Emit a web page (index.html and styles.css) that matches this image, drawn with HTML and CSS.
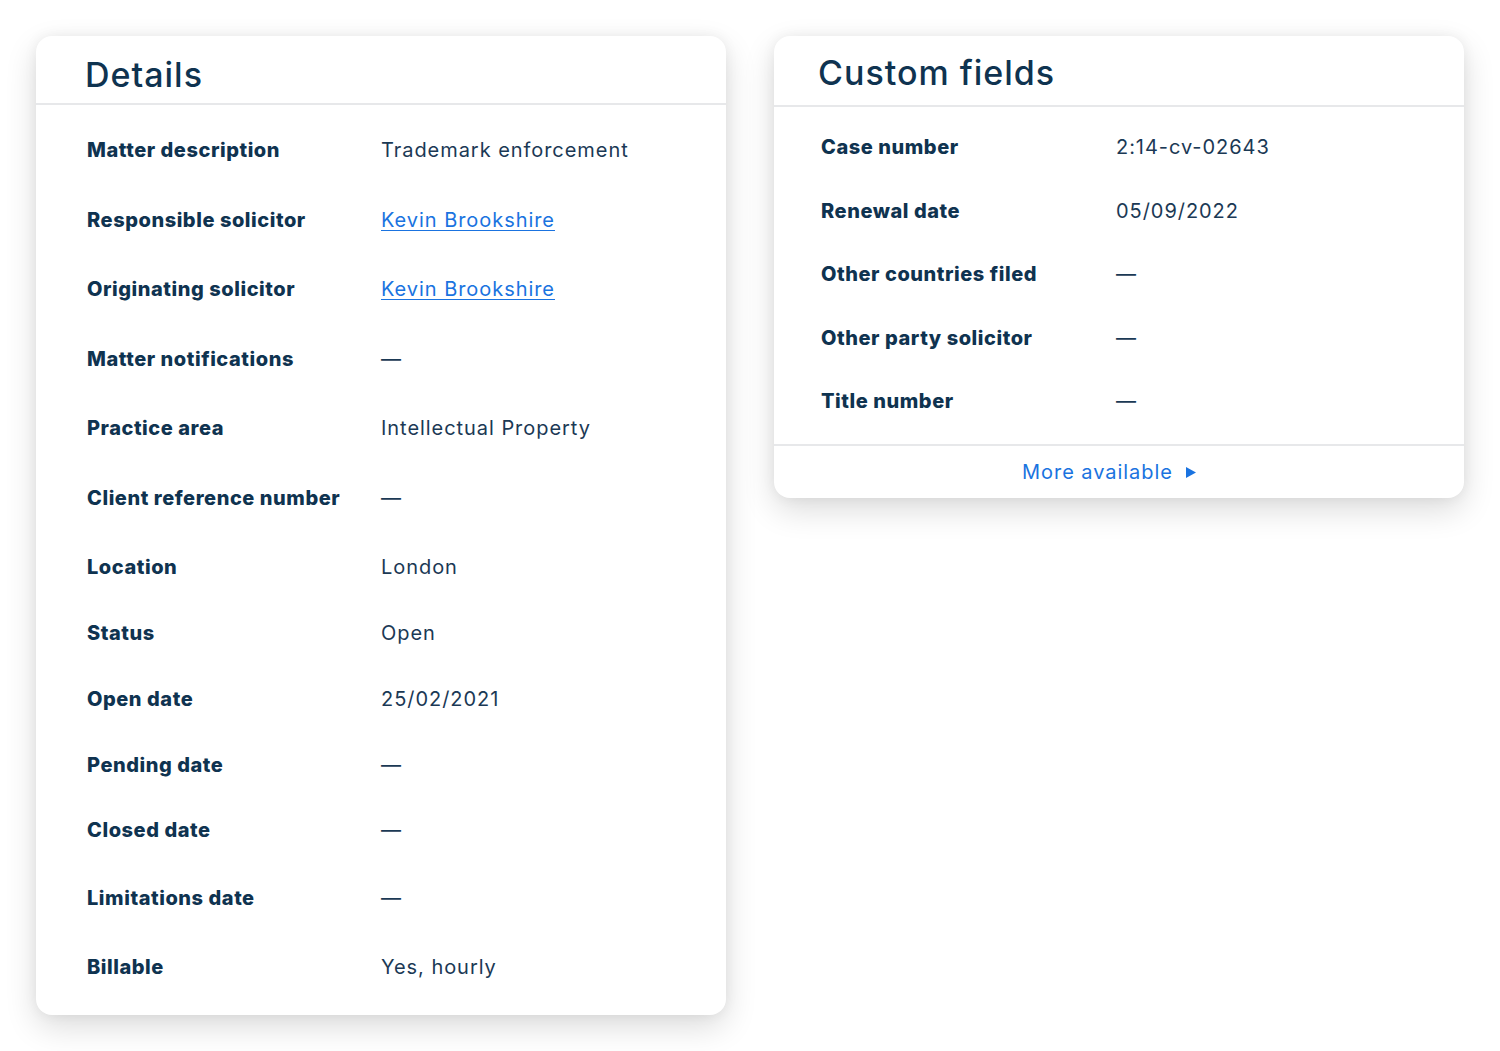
FILE: index.html
```html
<!DOCTYPE html>
<html lang="en">
<head>
<meta charset="utf-8">
<title>Matter details</title>
<link rel="stylesheet" href="styles.css">
</head>
<body>
<main class="page">
  <section class="card details">
    <header class="card-head"><h2>Details</h2></header>
    <dl class="fields">
      <div class="row"><dt>Matter description</dt><dd>Trademark enforcement</dd></div>
      <div class="row"><dt>Responsible solicitor</dt><dd><a href="#">Kevin Brookshire</a></dd></div>
      <div class="row"><dt>Originating solicitor</dt><dd><a href="#">Kevin Brookshire</a></dd></div>
      <div class="row"><dt>Matter notifications</dt><dd>—</dd></div>
      <div class="row"><dt>Practice area</dt><dd>Intellectual Property</dd></div>
      <div class="row"><dt>Client reference number</dt><dd>—</dd></div>
      <div class="row"><dt>Location</dt><dd>London</dd></div>
      <div class="row"><dt>Status</dt><dd>Open</dd></div>
      <div class="row"><dt>Open date</dt><dd>25/02/2021</dd></div>
      <div class="row"><dt>Pending date</dt><dd>—</dd></div>
      <div class="row"><dt>Closed date</dt><dd>—</dd></div>
      <div class="row"><dt>Limitations date</dt><dd>—</dd></div>
      <div class="row"><dt>Billable</dt><dd>Yes, hourly</dd></div>
    </dl>
  </section>

  <section class="card custom">
    <header class="card-head"><h2>Custom fields</h2></header>
    <dl class="fields">
      <div class="row"><dt>Case number</dt><dd>2:14-cv-02643</dd></div>
      <div class="row"><dt>Renewal date</dt><dd>05/09/2022</dd></div>
      <div class="row"><dt>Other countries filed</dt><dd>—</dd></div>
      <div class="row"><dt>Other party solicitor</dt><dd>—</dd></div>
      <div class="row"><dt>Title number</dt><dd>—</dd></div>
    </dl>
    <footer class="card-foot">
      <a href="#" class="more">More available
        <svg class="tri" width="10" height="11" viewBox="0 0 10 11" aria-hidden="true"><path d="M0 0 L10 5.5 L0 11 Z" fill="currentColor"/></svg>
      </a>
    </footer>
  </section>
</main>
</body>
</html>
```

FILE: styles.css
```css
* { box-sizing: border-box; }

html, body {
  margin: 0;
  padding: 0;
  background: #ffffff;
}

body {
  font-family: "Inter", "Open Sans", sans-serif;
  color: #0f3350;
  min-height: 1051px;
}

.page {
  display: flex;
  align-items: flex-start;
  gap: 48px;
  padding: 36px;
}

.card {
  width: 690px;
  background: #fff;
  border-radius: 16px;
  box-shadow: 0 12px 32px rgba(0, 0, 0, 0.14), 0 0 14px rgba(0, 0, 0, 0.06);
  overflow: hidden;
}

.card-head {
  border-bottom: 2px solid #e7e8ea;
}

.card-head h2 {
  margin: 0;
  font-weight: 500;
  font-size: 34px;
  line-height: 40px;
  color: #0f3350;
  letter-spacing: 1px;
}

.details .card-head { height: 69px; padding: 19px 0 0 49px; }
.custom .card-head { height: 71px; padding: 17px 0 0 44px; }

.fields {
  margin: 0;
  display: grid;
  align-items: start;
}

.details .fields {
  padding: 31px 0 34px 51px;
  grid-template-rows: repeat(6, 69.5px) 66px 66px 65.5px 65.5px 68px 69px auto;
}

.custom .fields {
  padding: 26px 0 29px 47px;
  grid-template-rows: repeat(4, 63.5px) auto;
}

.row {
  display: grid;
  align-items: center;
  line-height: 28px;
}

.details .row { grid-template-columns: 294px 1fr; }
.custom .row { grid-template-columns: 295px 1fr; }

dt {
  font-weight: 800;
  font-size: 20px;
  letter-spacing: 0.55px;
  color: #0f3350;
}

dd {
  margin: 0;
  font-size: 20px;
  letter-spacing: 0.95px;
  font-weight: 400;
  color: #1b3955;
}

dd a {
  color: #1a73e0;
  text-decoration: underline;
  text-underline-offset: 3px;
  text-decoration-thickness: 1px;
}

.card-foot {
  border-top: 2px solid #e7e8ea;
  height: 54px;
  display: flex;
  align-items: center;
  justify-content: center;
  padding-right: 20px;
}

.more {
  display: inline-flex;
  align-items: center;
  gap: 13px;
  font-size: 20px;
  letter-spacing: 0.95px;
  color: #1a73e0;
  text-decoration: none;
}

.tri { display: block; }
```
